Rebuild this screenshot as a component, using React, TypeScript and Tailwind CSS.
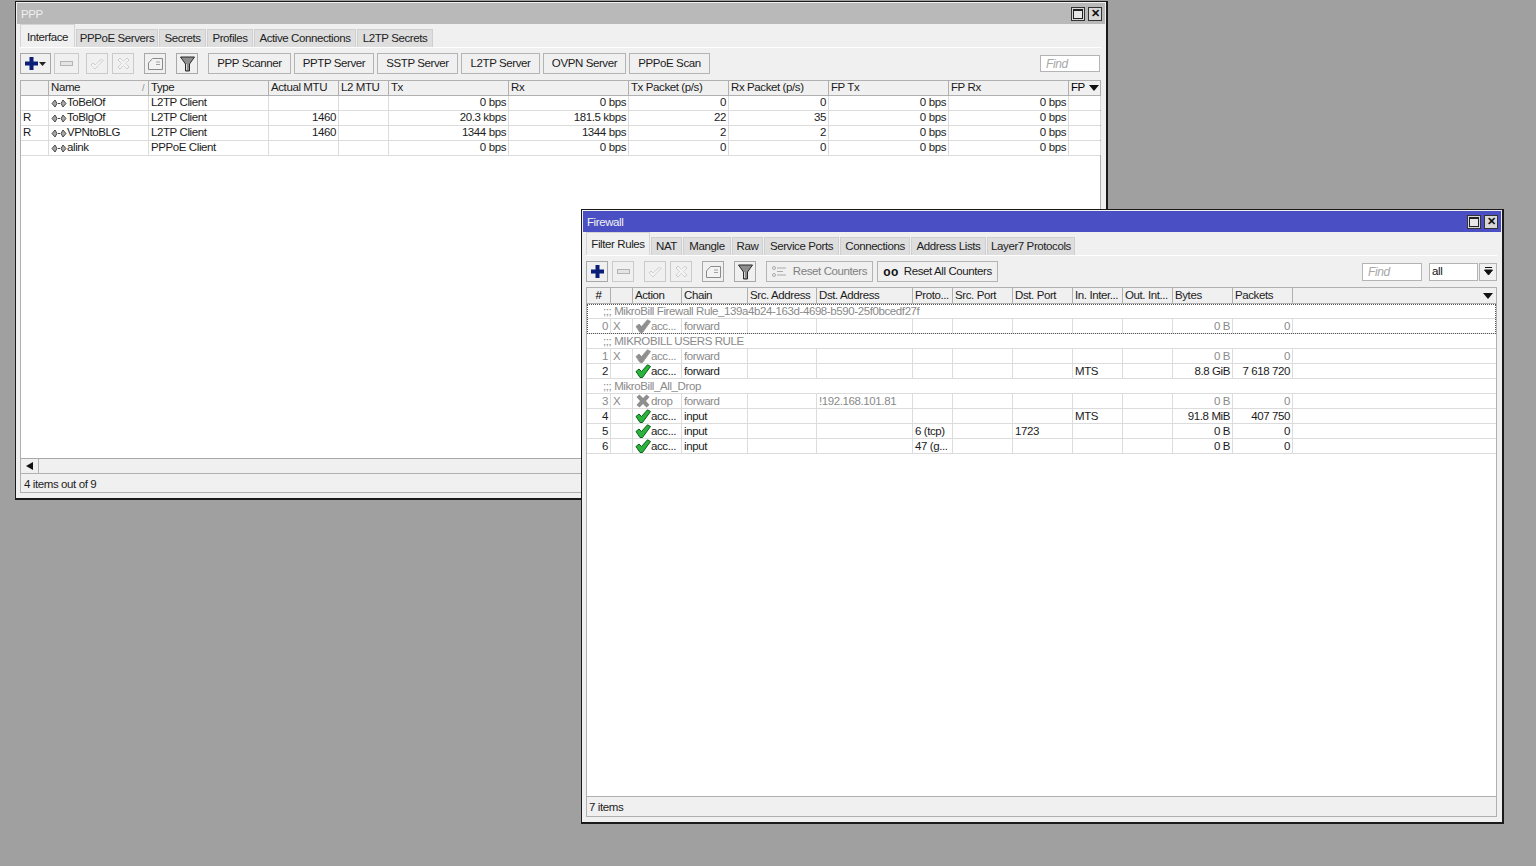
import type { ReactNode } from "react";

const Check = ({ on }: { on: boolean }) => (
	<svg width="16" height="14" viewBox="0 0 16 14" className="shrink-0 -mt-[2px]">
		<path
			d="M1 7.5 L4 5 L6.5 7.5 L12.5 0.8 L15.5 2.5 L7.5 13.5 L5 13.5 Z"
			fill={on ? "#2bb33d" : "#8f8f8f"}
			stroke={on ? "#0b5f16" : "#9a9a9a"}
			strokeWidth="1"
			strokeLinejoin="round"
		/>
	</svg>
);

const Cross = () => (
	<svg width="16" height="14" viewBox="0 0 16 14" className="shrink-0 -mt-[2px]">
		<path
			d="M1.5 3 L4.5 0.5 L8 4 L11.5 0.5 L14.5 3 L11 7 L14.5 11 L11.5 13.5 L8 10 L4.5 13.5 L1.5 11 L5 7 Z"
			fill="#8f8f8f"
		/>
	</svg>
);

const IfaceIcon = () => (
	<svg width="16" height="9" viewBox="0 0 16 9" className="shrink-0">
		<path d="M4 1 L1 4.5 L4 8 L6 4.5 Z M12 1 L10 4.5 L12 8 L15 4.5 Z" fill="#a8a8a8" stroke="#3a3a3a" strokeWidth="0.9" />
		<path d="M7 4.5 H9" stroke="#444" strokeWidth="1" />
	</svg>
);

const ToolBtn = ({ children, w = "w-[22px]", soft }: { children: ReactNode; w?: string; soft?: boolean }) => (
	<div
		className={`${w} h-[21px] flex items-center justify-center border ${soft ? "border-[#cacaca]" : "border-[#a8a8a8]"} bg-[#f0f0f0] shrink-0`}
	>
		{children}
	</div>
);

const Plus = () => (
	<svg width="13" height="13" viewBox="0 0 13 13">
		<path d="M4.5 0 H8.5 V4.5 H13 V8.5 H8.5 V13 H4.5 V8.5 H0 V4.5 H4.5 Z" fill="#0b1f78" />
	</svg>
);

const Caret = () => (
	<svg width="7" height="4" viewBox="0 0 7 4">
		<path d="M0 0 H7 L3.5 4 Z" fill="#222" />
	</svg>
);

const Minus = () => (
	<svg width="13" height="5" viewBox="0 0 13 5">
		<rect x="0.5" y="0.5" width="12" height="4" fill="#e4e4e4" stroke="#b4b4b4" />
	</svg>
);

const OutlineCheck = () => (
	<svg width="14" height="12" viewBox="0 0 14 12">
		<path d="M1 7 L3 5 L5 7 L11.5 1 L13 2.5 L5 11 Z" fill="#f4f4f4" stroke="#bcbcbc" strokeDasharray="1 0.6" />
	</svg>
);

const OutlineX = () => (
	<svg width="13" height="13" viewBox="0 0 13 13">
		<path
			d="M1 3 L3 1 L6.5 4.5 L10 1 L12 3 L8.5 6.5 L12 10 L10 12 L6.5 8.5 L3 12 L1 10 L4.5 6.5 Z"
			fill="#f4f4f4"
			stroke="#bcbcbc"
			strokeDasharray="1 0.6"
		/>
	</svg>
);

const Note = () => (
	<svg width="15" height="12" viewBox="0 0 15 12">
		<path d="M0.5 11.5 V5 L4.5 0.5 H14.5 V11.5 Z" fill="#f2f2f2" stroke="#8a8a8a" />
		<path d="M8 4 H12 M8 6.5 H12" stroke="#a0a0a0" />
	</svg>
);

const Funnel = () => (
	<svg width="15" height="16" viewBox="0 0 15 16">
		<path d="M0.5 1 H14.5 L9.5 8 V15 H5.5 V8 Z" fill="#8d8d8d" stroke="#2a2a2a" />
		<path d="M6.5 8 V14" stroke="#d4d4d4" />
	</svg>
);

const ListLines = () => (
	<svg width="15" height="11" viewBox="0 0 15 11">
		<circle cx="2" cy="2" r="1.5" fill="none" stroke="#aaa" />
		<circle cx="2" cy="9" r="1.5" fill="none" stroke="#aaa" />
		<path d="M5 2 H14 M5 5.5 H11 M5 9 H14" stroke="#aaa" />
	</svg>
);

const TextBtn = ({ label, w, dim, gap = "gap-2" }: { label: ReactNode; w: string; dim?: boolean; gap?: string }) => (
	<div
		className={`${w} h-[21px] flex items-center justify-center ${gap} border border-[#b4b4b4] bg-[#f0f0f0] shrink-0 ${dim ? "text-[#808080]" : "text-[#1c1c1c]"}`}
	>
		{label}
	</div>
);

const Tabs = ({ items, active, activePad }: { items: [string, string][]; active: string; activePad: string }) => (
	<div className="flex items-end gap-px">
		{items.map(([label, w]) =>
			label === active ? (
				<div
					key={label}
					className={`${w} h-[23px] ${activePad} flex items-center justify-center bg-[#f0f0f0] border border-b-0 border-[#d4d4d4] text-[#1c1c1c]`}
				>
					{label}
				</div>
			) : (
				<div
					key={label}
					className={`${w} h-[18px] flex items-center justify-center bg-[#dedede] border border-b-0 border-[#cfcfcf] text-[#222]`}
				>
					{label}
				</div>
			),
		)}
	</div>
);

const WindowFrame = ({
	pos,
	title,
	titleCls,
	children,
}: {
	pos: string;
	title: string;
	titleCls: string;
	children: ReactNode;
}) => (
	<div className={`absolute ${pos} flex flex-col border border-[#1a1a1a] border-r-2 border-b-2 bg-[#f0f0f0]`}>
		<div className={`h-[21px] shrink-0 m-px mb-0 flex items-center justify-between pl-[4px] pr-[3px] ${titleCls}`}>
			<span className="pt-[2px]">{title}</span>
			<div className="flex gap-[3px]">
				<div className="w-[14px] h-[14px] border border-[#333] bg-[#d8d8d8] flex items-center justify-center">
					<div className="w-[10px] h-[10px] border border-[#222] border-t-2 bg-[#e8e8e8]" />
				</div>
				<div className="w-[14px] h-[14px] border border-[#333] bg-[#d8d8d8] flex items-center justify-center text-[#111] font-bold text-[11px] leading-none">
					✕
				</div>
			</div>
		</div>
		{children}
	</div>
);

const H = ({ children, right }: { children?: ReactNode; right?: ReactNode }) => (
	<div className="flex items-center justify-between pl-[2px] pr-[4px] border-r border-[#b0b0b0] text-[#1c1c1c] overflow-hidden whitespace-nowrap">
		<span>{children}</span>
		{right}
	</div>
);

const C = ({ children, r, dim, low }: { children?: ReactNode; r?: boolean; dim?: boolean; low?: boolean }) => (
	<div
		className={`flex items-center px-[2px] border-r border-[#dcdcdc] overflow-hidden whitespace-nowrap ${low ? "pt-[2px]" : ""} ${r ? "justify-end" : ""} ${dim ? "text-[#8a8a8a]" : "text-[#1c1c1c]"}`}
	>
		{children}
	</div>
);

const pppRows = [
	["", "ToBelOf", "L2TP Client", "", "", "0 bps", "0 bps", "0", "0", "0 bps", "0 bps", ""],
	["R", "ToBlgOf", "L2TP Client", "1460", "", "20.3 kbps", "181.5 kbps", "22", "35", "0 bps", "0 bps", ""],
	["R", "VPNtoBLG", "L2TP Client", "1460", "", "1344 bps", "1344 bps", "2", "2", "0 bps", "0 bps", ""],
	["", "alink", "PPPoE Client", "", "", "0 bps", "0 bps", "0", "0", "0 bps", "0 bps", ""],
];

const pppGrid = "grid grid-cols-[28px_100px_120px_70px_50px_120px_120px_100px_100px_120px_120px_32px]";

const PppWindow = () => (
	<WindowFrame pos="left-[15px] top-[1px] w-[1093px] h-[499px]" title="PPP" titleCls="bg-[#b9b9b9] text-[#efefef]">
		<div className="flex flex-col flex-1 min-h-0 pl-1 pr-[5px] pb-[5px]">
			<Tabs
				active="Interface"
				activePad="pt-[4px]"
				items={[
					["Interface", "w-[55px]"],
					["PPPoE Servers", "w-[82px]"],
					["Secrets", "w-[47px]"],
					["Profiles", "w-[46px]"],
					["Active Connections", "w-[102px]"],
					["L2TP Secrets", "w-[76px]"],
				]}
			/>
			<div className="flex items-center h-[33px] pb-[1px] shrink-0 border-t border-white">
				<ToolBtn w="w-[31px]">
					<div className="flex items-center gap-px">
						<Plus />
						<Caret />
					</div>
				</ToolBtn>
				<div className="w-[3px]" />
				<ToolBtn soft w="w-[25px]"><Minus /></ToolBtn>
				<div className="w-[7px]" />
				<ToolBtn soft><OutlineCheck /></ToolBtn>
				<div className="w-[4px]" />
				<ToolBtn soft><OutlineX /></ToolBtn>
				<div className="w-[10px]" />
				<ToolBtn><Note /></ToolBtn>
				<div className="w-[10px]" />
				<ToolBtn><Funnel /></ToolBtn>
				<div className="w-[10px]" />
				<div className="flex gap-[3px]">
					<TextBtn label="PPP Scanner" w="w-[83px]" />
					<TextBtn label="PPTP Server" w="w-[80px]" />
					<TextBtn label="SSTP Server" w="w-[81px]" />
					<TextBtn label="L2TP Server" w="w-[79px]" />
					<TextBtn label="OVPN Server" w="w-[83px]" />
					<TextBtn label="PPPoE Scan" w="w-[81px]" />
				</div>
				<div className="ml-auto mr-[1px] w-[60px] h-[17px] border border-[#b4b4b4] bg-white italic text-[#a8a8a8] pl-[5px] flex items-center text-[12px]">
					Find
				</div>
			</div>
			<div className="flex-1 min-h-0 border border-[#b0b0b0] bg-white flex flex-col">
				<div className={`${pppGrid} h-[15px] shrink-0 bg-[#f0f0f0] border-b border-[#b0b0b0]`}>
					<H />
					<H right={<span className="text-[#888] text-[9px]">/</span>}>Name</H>
					<H>Type</H>
					<H>Actual MTU</H>
					<H>L2 MTU</H>
					<H>Tx</H>
					<H>Rx</H>
					<H>Tx Packet (p/s)</H>
					<H>Rx Packet (p/s)</H>
					<H>FP Tx</H>
					<H>FP Rx</H>
					<div className="flex items-center justify-between pl-[2px] pr-[2px]">
						<span>FP</span>
						<svg width="10" height="6" viewBox="0 0 10 6"><path d="M0 0 H10 L5 6 Z" fill="#111" /></svg>
					</div>
				</div>
				{pppRows.map((r) => (
					<div key={r[1]} className={`${pppGrid} h-[15px] shrink-0 border-b border-[#dcdcdc]`}>
						<C>{r[0]}</C>
						<C>
							<IfaceIcon />
							{r[1]}
						</C>
						<C>{r[2]}</C>
						<C r>{r[3]}</C>
						<C r>{r[4]}</C>
						<C r>{r[5]}</C>
						<C r>{r[6]}</C>
						<C r>{r[7]}</C>
						<C r>{r[8]}</C>
						<C r>{r[9]}</C>
						<C r>{r[10]}</C>
						<C />
					</div>
				))}
				<div className="mt-auto h-[15px] shrink-0 flex border-t border-[#a8a8a8] bg-[#f0f0f0]">
					<div className="w-[18px] border-r border-[#b4b4b4] flex items-center justify-center">
						<svg width="8" height="8" viewBox="0 0 8 8"><path d="M7 0 V8 L0 4 Z" fill="#111" /></svg>
					</div>
				</div>
			</div>
			<div className="h-[19px] shrink-0 flex items-center pl-[3px] pt-[4px] border-x border-b border-[#b0b0b0] text-[#1c1c1c]">
				4 items out of 9
			</div>
		</div>
	</WindowFrame>
);

type FwRow =
	| { note: string }
	| { n: string; x?: boolean; icon: "on" | "off" | "drop"; action: string; chain: string; dst?: string; proto?: string; dport?: string; inIf?: string; bytes: string; packets: string };

const fwRows: FwRow[] = [
	{ note: ";;; MikroBill Firewall Rule_139a4b24-163d-4698-b590-25f0bcedf27f" },
	{ n: "0", x: true, icon: "off", action: "acc...", chain: "forward", bytes: "0 B", packets: "0" },
	{ note: ";;; MIKROBILL USERS RULE" },
	{ n: "1", x: true, icon: "off", action: "acc...", chain: "forward", bytes: "0 B", packets: "0" },
	{ n: "2", icon: "on", action: "acc...", chain: "forward", inIf: "MTS", bytes: "8.8 GiB", packets: "7 618 720" },
	{ note: ";;; MikroBill_All_Drop" },
	{ n: "3", x: true, icon: "drop", action: "drop", chain: "forward", dst: "!192.168.101.81", bytes: "0 B", packets: "0" },
	{ n: "4", icon: "on", action: "acc...", chain: "input", inIf: "MTS", bytes: "91.8 MiB", packets: "407 750" },
	{ n: "5", icon: "on", action: "acc...", chain: "input", proto: "6 (tcp)", dport: "1723", bytes: "0 B", packets: "0" },
	{ n: "6", icon: "on", action: "acc...", chain: "input", proto: "47 (g...", bytes: "0 B", packets: "0" },
];

const fwGrid = "grid grid-cols-[24px_22px_49px_66px_69px_96px_40px_60px_60px_50px_50px_60px_60px_1fr]";

const FirewallWindow = () => (
	<WindowFrame pos="left-[581px] top-[209px] w-[923px] h-[615px]" title="Firewall" titleCls="bg-[#4a50c4] text-[#f2f2f2]">
		<div className="flex flex-col flex-1 min-h-0 pl-[4px] pr-[5px] pb-[5px]">
			<Tabs
				active="Filter Rules"
				activePad="pt-[2px]"
				items={[
					["Filter Rules", "w-[64px]"],
					["NAT", "w-[31px]"],
					["Mangle", "w-[48px]"],
					["Raw", "w-[31px]"],
					["Service Ports", "w-[75px]"],
					["Connections", "w-[70px]"],
					["Address Lists", "w-[75px]"],
					["Layer7 Protocols", "w-[88px]"],
				]}
			/>
			<div className="flex items-center h-[32px] shrink-0 border-t border-white">
				<ToolBtn><Plus /></ToolBtn>
				<div className="w-[4px]" />
				<ToolBtn soft><Minus /></ToolBtn>
				<div className="w-[10px]" />
				<ToolBtn soft><OutlineCheck /></ToolBtn>
				<div className="w-[4px]" />
				<ToolBtn soft><OutlineX /></ToolBtn>
				<div className="w-[10px]" />
				<ToolBtn><Note /></ToolBtn>
				<div className="w-[10px]" />
				<ToolBtn><Funnel /></ToolBtn>
				<div className="w-[10px]" />
				<TextBtn dim gap="gap-[6px]" w="w-[107px]" label={<><ListLines /><span>Reset Counters</span></>} />
				<div className="w-[4px]" />
				<TextBtn
					gap="gap-[5px]"
					w="w-[121px]"
					label={<><span className="font-bold text-[12px] tracking-[0.5px] text-[#111]">oo</span><span>Reset All Counters</span></>}
				/>
				<div className="ml-auto w-[60px] h-[18px] border border-[#b4b4b4] bg-white italic text-[#a8a8a8] pl-[5px] flex items-center text-[12px]">
					Find
				</div>
				<div className="ml-[7px] w-[49px] h-[18px] border border-[#b4b4b4] bg-white pl-[2px] flex items-center text-[#111]">
					all
				</div>
				<div className="ml-px w-[18px] h-[18px] border border-[#b4b4b4] flex items-center justify-center">
					<svg width="9" height="9" viewBox="0 0 9 9"><path d="M1 0.5 H8 M0.5 3 H8.5 L4.5 8 Z" stroke="#111" fill="#111" /></svg>
				</div>
			</div>
			<div className="relative flex-1 min-h-0 border border-[#b0b0b0] bg-white flex flex-col">
				<div className={`${fwGrid} h-[16px] shrink-0 bg-[#f0f0f0] border-b border-[#b0b0b0]`}>
					<div className="flex items-center justify-center border-r border-[#b0b0b0]">#</div>
					<H />
					<H>Action</H>
					<H>Chain</H>
					<H>Src. Address</H>
					<H>Dst. Address</H>
					<H>Proto...</H>
					<H>Src. Port</H>
					<H>Dst. Port</H>
					<H>In. Inter...</H>
					<H>Out. Int...</H>
					<H>Bytes</H>
					<H>Packets</H>
					<div className="flex items-center justify-end pr-[3px]">
						<svg width="10" height="6" viewBox="0 0 10 6"><path d="M0 0 H10 L5 6 Z" fill="#111" /></svg>
					</div>
				</div>
				{fwRows.map((r, i) =>
					"note" in r ? (
						<div key={i} className="h-[15px] shrink-0 pl-[16px] pt-[2px] flex items-center border-b border-[#dcdcdc] text-[#8a8a8a] whitespace-nowrap">
							{r.note}
						</div>
					) : (
						<div key={i} className={`${fwGrid} h-[15px] shrink-0 border-b border-[#dcdcdc]`}>
							<C low r dim={r.x}>{r.n}</C>
							<C low dim={r.x}>{r.x ? "X" : ""}</C>
							<C low dim={r.icon !== "on"}>
								{r.icon === "drop" ? <Cross /> : <Check on={r.icon === "on"} />}
								{r.action}
							</C>
							<C low dim={r.x}>{r.chain}</C>
							<C low />
							<C low dim={r.x}>{r.dst}</C>
							<C low dim={r.x}>{r.proto}</C>
							<C low />
							<C low>{r.dport}</C>
							<C low>{r.inIf}</C>
							<C low />
							<C low r dim={r.x}>{r.bytes}</C>
							<C low r dim={r.x}>{r.packets}</C>
							<div />
						</div>
					),
				)}
				<div className="absolute left-0 right-0 top-[16px] h-[30px] border border-dotted border-[#555] pointer-events-none" />
			</div>
			<div className="h-[20px] shrink-0 flex items-center pl-[2px] pt-[2px] border-x border-b border-[#b0b0b0] text-[#1c1c1c]">
				7 items
			</div>
		</div>
	</WindowFrame>
);

export default function App() {
	return (
		<div className="relative w-[1536px] h-[866px] overflow-hidden bg-[#a0a0a0] font-['Liberation_Sans',Arial,sans-serif] text-[11.5px] tracking-[-0.4px] leading-none">
			<PppWindow />
			<FirewallWindow />
		</div>
	);
}
